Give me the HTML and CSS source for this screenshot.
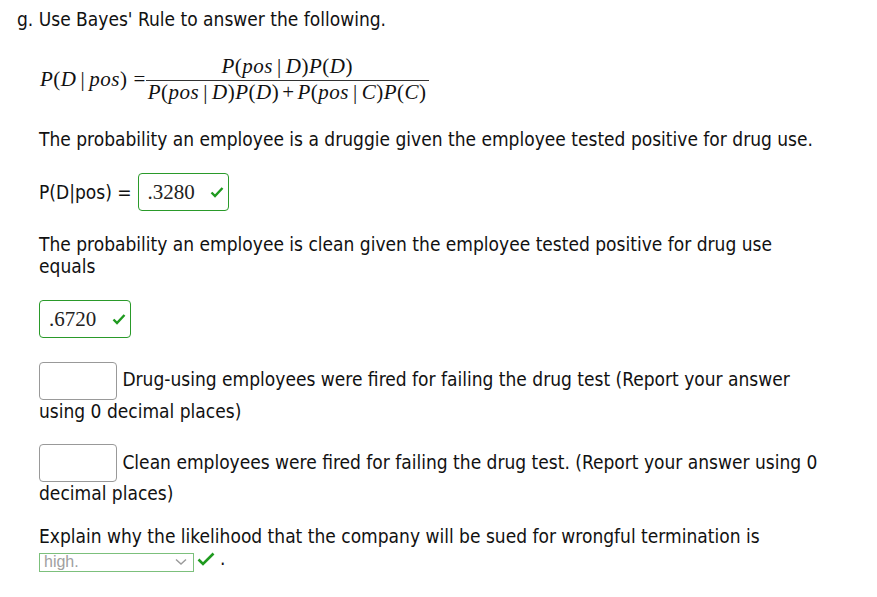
FILE: index.html
```html
<!DOCTYPE html>
<html>
<head>
<meta charset="utf-8">
<link rel="stylesheet" href="styles.css">
</head>
<body>
<div class="page">
  <p class="title">g. Use Bayes' Rule to answer the following.</p>
  <div class="formula">
    <span class="lhs"><i>P</i>(<i>D</i><span class="bar">|</span><i>pos</i>)<span class="eq">=</span></span>
    <span class="frac">
      <span class="num"><i>P</i>(<i>pos</i><span class="bar">|</span><i>D</i>)<i>P</i>(<i>D</i>)</span>
      <span class="den"><i>P</i>(<i>pos</i><span class="bar">|</span><i>D</i>)<i>P</i>(<i>D</i>)<span class="plus">+</span><i>P</i>(<i>pos</i><span class="bar">|</span><i>C</i>)<i>P</i>(<i>C</i>)</span>
    </span>
  </div>
  <p class="text q1">The probability an employee is a druggie given the employee tested positive for drug use.</p>
  <div class="row r1">
    <span class="label">P(D<span class="pipe">|</span>pos) =</span>
    <span class="answer"><span class="val">.3280</span><svg class="chk" viewBox="0 0 14 12" width="14" height="12"><path d="M1.5 6.5 L5 10 L12.5 2" fill="none" stroke="#1f9a1f" stroke-width="2.4"/></svg></span>
  </div>
  <p class="text q2">The probability an employee is clean given the employee tested positive for drug use equals</p>
  <div class="row r2">
    <span class="answer"><span class="val">.6720</span><svg class="chk" viewBox="0 0 14 12" width="14" height="12"><path d="M1.5 6.5 L5 10 L12.5 2" fill="none" stroke="#1f9a1f" stroke-width="2.4"/></svg></span>
  </div>
  <p class="text q3"><span class="blank"></span> Drug-using employees were fired for failing the drug test (Report your answer using 0 decimal places)</p>
  <p class="text q4"><span class="blank"></span> Clean employees were fired for failing the drug test. (Report your answer using 0 decimal places)</p>
  <p class="text q5">Explain why the likelihood that the company will be sued for wrongful termination is<br><span class="select"><span class="sel-text">high.</span><svg class="caret" viewBox="0 0 12 8" width="12" height="8"><path d="M1 1.5 L6 6 L11 1.5" fill="none" stroke="#9a9a9a" stroke-width="1.4"/></svg></span><svg class="chk2" viewBox="0 0 18 14" width="18" height="14"><path d="M1.5 7.5 L6 12 L16.5 1.5" fill="none" stroke="#1f9a1f" stroke-width="2.6"/></svg><span class="dot">.</span></p>
</div>
</body>
</html>
```

FILE: styles.css
```css
html, body {
  margin: 0;
  padding: 0;
  background: #fff;
}
.page {
  font-family: "DejaVu Sans Condensed", "DejaVu Sans", sans-serif;
  font-size: 19px;
  color: #111;
  padding: 8px 0 0 17px;
  width: 809px;
}
p { margin: 0; }
.title { line-height: 22px; }
.text { line-height: 22px; }
.formula {
  display: flex;
  align-items: center;
  font-family: "Liberation Serif", serif;
  font-size: 21px;
  color: #111;
  margin: 23px 0 0 23px;
  height: 50px;
  letter-spacing: 0.5px;
}
.bar { margin: 0 4px; }
.eq { margin-left: 6px; }
.plus { margin: 0 3px; }
.lhs { margin-top: 2px; }
.frac {
  display: inline-flex;
  flex-direction: column;
  align-items: center;
}
.num {
  line-height: 24px;
  padding: 0 2px 2px;
  text-align: center;
}
.den {
  line-height: 22px;
  padding: 0 2px;
  border-top: 1.5px solid #333;
}
.frac .num { width: 100%; }
.q1 { margin: 25px 0 0 22px; }
.row {
  display: flex;
  align-items: center;
  margin-left: 22px;
}
.r1 { margin-top: 23px; gap: 6px; }
.label { line-height: 22px; }
.pipe { margin: 0; }
.answer {
  display: inline-flex;
  align-items: center;
  border: 1px solid #2a9a2a;
  border-radius: 4px;
  height: 38px;
  padding: 0 4px 0 9px;
  box-sizing: border-box;
}
.r1 .answer { width: 91px; }
.r2 .answer { width: 92px; }
.val {
  font-family: "Liberation Serif", serif;
  font-size: 21px;
  color: #222;
  flex: 1;
}
.q2 { margin: 22px 0 0 22px; }
.r2 { margin-top: 23px; }
.q3, .q4 {
  margin-left: 22px;
  line-height: 31px;
}
.q3 { margin-top: 26px; }
.q4 { margin-top: 20px; }
.blank {
  display: inline-block;
  width: 78px;
  height: 38px;
  margin: -4px 0;
  border: 1px solid #999;
  border-radius: 4px;
  box-sizing: border-box;
  vertical-align: middle;
}
.q5 {
  margin: 16px 0 0 22px;
  line-height: 22px;
}
.select {
  display: inline-flex;
  align-items: center;
  justify-content: space-between;
  width: 155px;
  height: 19px;
  border: 1px solid #7cc07c;
  box-sizing: border-box;
  vertical-align: -2px;
  padding: 0 6px 0 4px;
  font-family: "Liberation Sans", sans-serif;
  font-size: 16px;
  color: #a0a0a0;
}
.chk2 { margin-left: 3px; vertical-align: -1px; }
.dot { margin-left: 5px; }
```
